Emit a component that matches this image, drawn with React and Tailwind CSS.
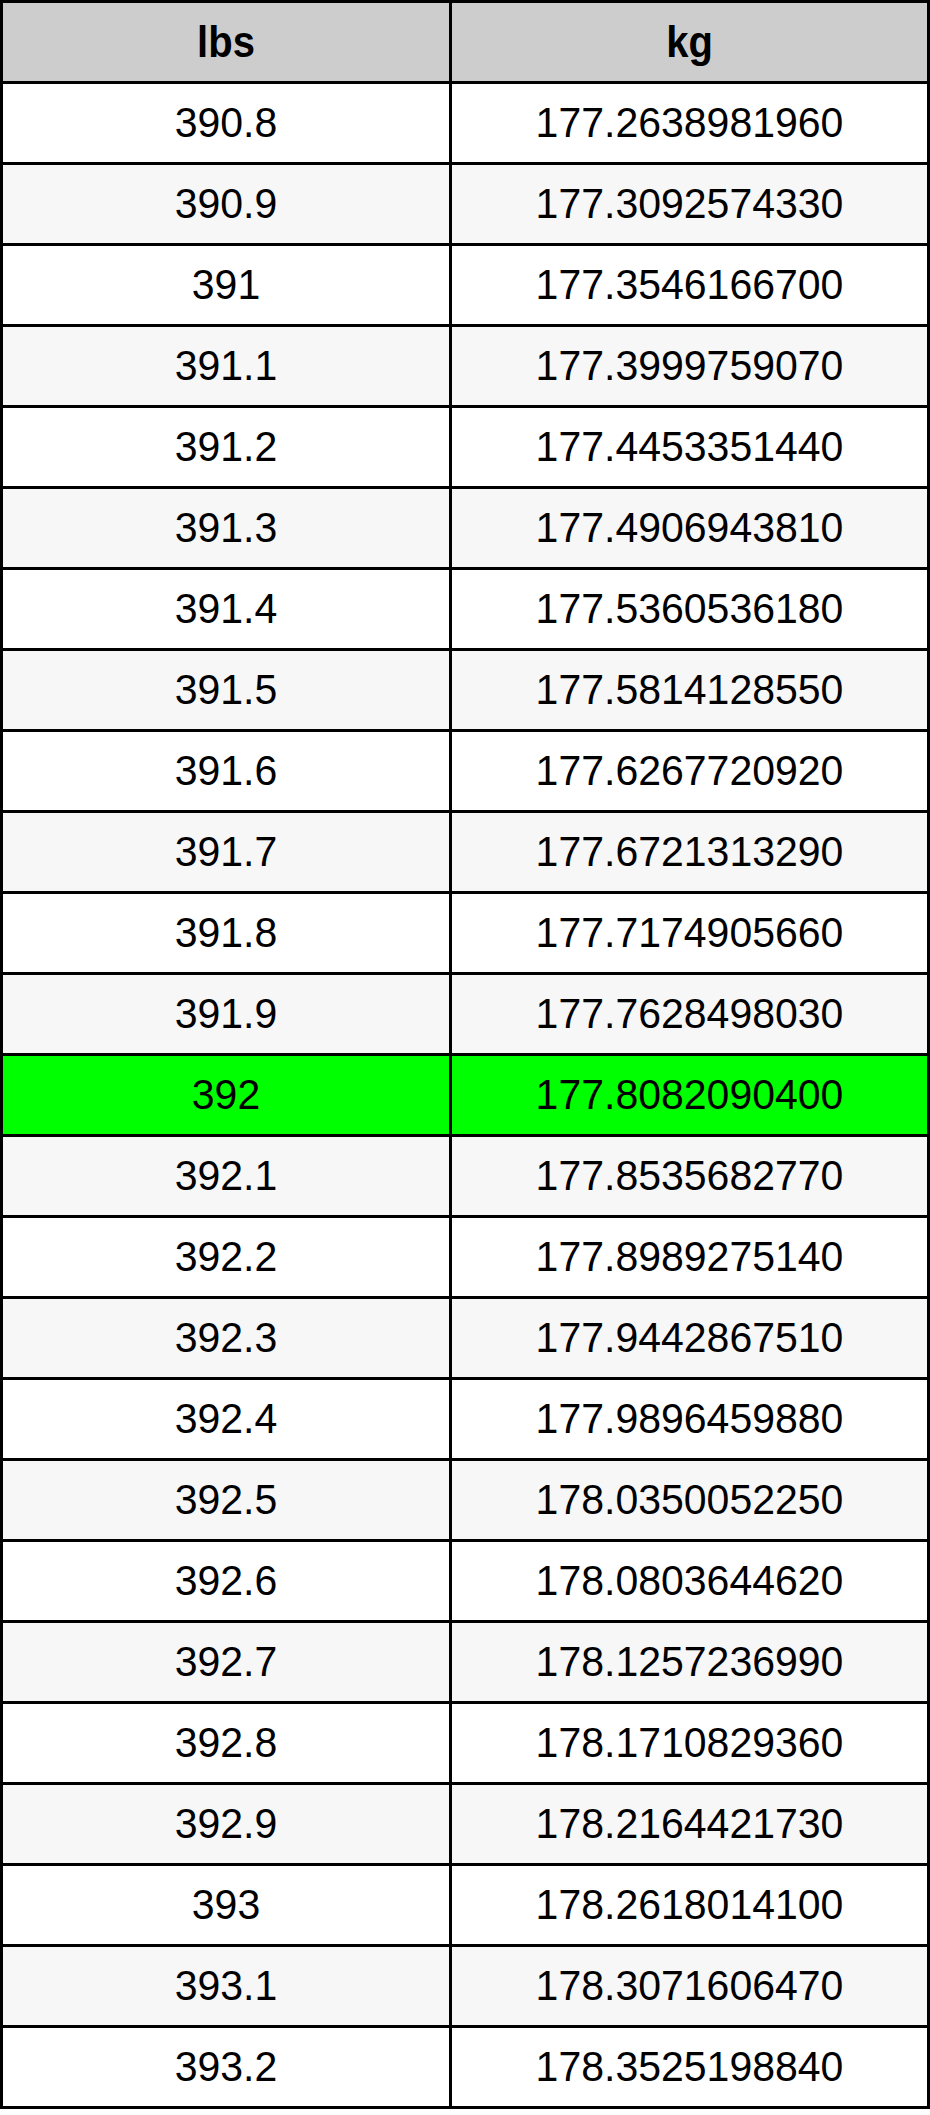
import React from "react";

const rows = [
  ["390.8", "177.2638981960"],
  ["390.9", "177.3092574330"],
  ["391", "177.3546166700"],
  ["391.1", "177.3999759070"],
  ["391.2", "177.4453351440"],
  ["391.3", "177.4906943810"],
  ["391.4", "177.5360536180"],
  ["391.5", "177.5814128550"],
  ["391.6", "177.6267720920"],
  ["391.7", "177.6721313290"],
  ["391.8", "177.7174905660"],
  ["391.9", "177.7628498030"],
  ["392", "177.8082090400"],
  ["392.1", "177.8535682770"],
  ["392.2", "177.8989275140"],
  ["392.3", "177.9442867510"],
  ["392.4", "177.9896459880"],
  ["392.5", "178.0350052250"],
  ["392.6", "178.0803644620"],
  ["392.7", "178.1257236990"],
  ["392.8", "178.1710829360"],
  ["392.9", "178.2164421730"],
  ["393", "178.2618014100"],
  ["393.1", "178.3071606470"],
  ["393.2", "178.3525198840"],
];

const App = () => {
  return (
    <div className="w-[930px] min-h-[2115px] bg-white font-['Liberation_Sans',Arial,sans-serif] text-black">
      <div className="border-l-[3px] border-t-[3px] border-black">
        {/* Header */}
        <div className="flex bg-[#cdcdcd]">
          <div className="w-[449px] h-[81px] border-r-[3px] border-b-[3px] border-black flex items-center justify-center text-[40px] font-bold">
            <span className="inline-block scale-y-[1.1]">lbs</span>
          </div>
          <div className="w-[478px] h-[81px] border-r-[3px] border-b-[3px] border-black flex items-center justify-center text-[40px] font-bold">
            <span className="inline-block scale-y-[1.1]">kg</span>
          </div>
        </div>

        {rows.map(([lbs, kg], i) => {
          const bg = lbs === "392" ? "bg-[#00ff00]" : i % 2 === 0 ? "bg-white" : "bg-[#f7f7f7]";
          return (
            <div key={lbs} className={"flex " + bg}>
              <div className="w-[449px] h-[81px] border-r-[3px] border-b-[3px] border-black flex items-center justify-center text-[41px]">
                <span className="inline-block scale-y-[1.05]">{lbs}</span>
              </div>
              <div className="w-[478px] h-[81px] border-r-[3px] border-b-[3px] border-black flex items-center justify-center text-[41px]">
                <span className="inline-block scale-y-[1.05]">{kg}</span>
              </div>
            </div>
          );
        })}
      </div>
    </div>
  );
};

export default App;
